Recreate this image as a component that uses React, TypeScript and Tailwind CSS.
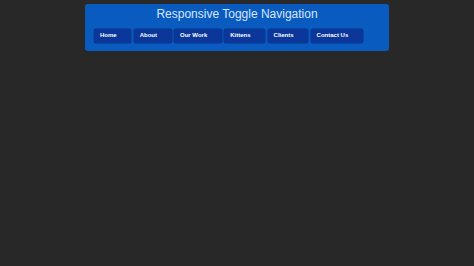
const links = ["Home", "About", "Our Work", "Kittens", "Clients", "Contact Us"];

export default function App() {
  return (
    <div className="min-h-[266px] w-full bg-[#282828] pt-[4px] font-['Liberation_Sans',Arial,sans-serif]">
      <header className="mx-auto w-[304px] rounded-[3px] bg-[#0a5bc0] px-[9px] pt-[1px] pb-[8px]">
        <h1 className="text-center text-[12px] leading-[18px] text-[#d6e6ff]">
          Responsive Toggle Navigation
        </h1>
        <nav className="mt-[5.5px] flex gap-[2.5px]">
          {links.map((l) => (
            <a
              key={l}
              href="#"
              className="flex h-[14px] items-center rounded-[2px] bg-[#0a3799] pl-[6px] pr-[14.5px] text-[6px] font-bold text-white shadow-[0_0_0_0.5px_rgba(0,20,80,0.5)]"
            >
              {l}
            </a>
          ))}
        </nav>
      </header>
    </div>
  );
}
